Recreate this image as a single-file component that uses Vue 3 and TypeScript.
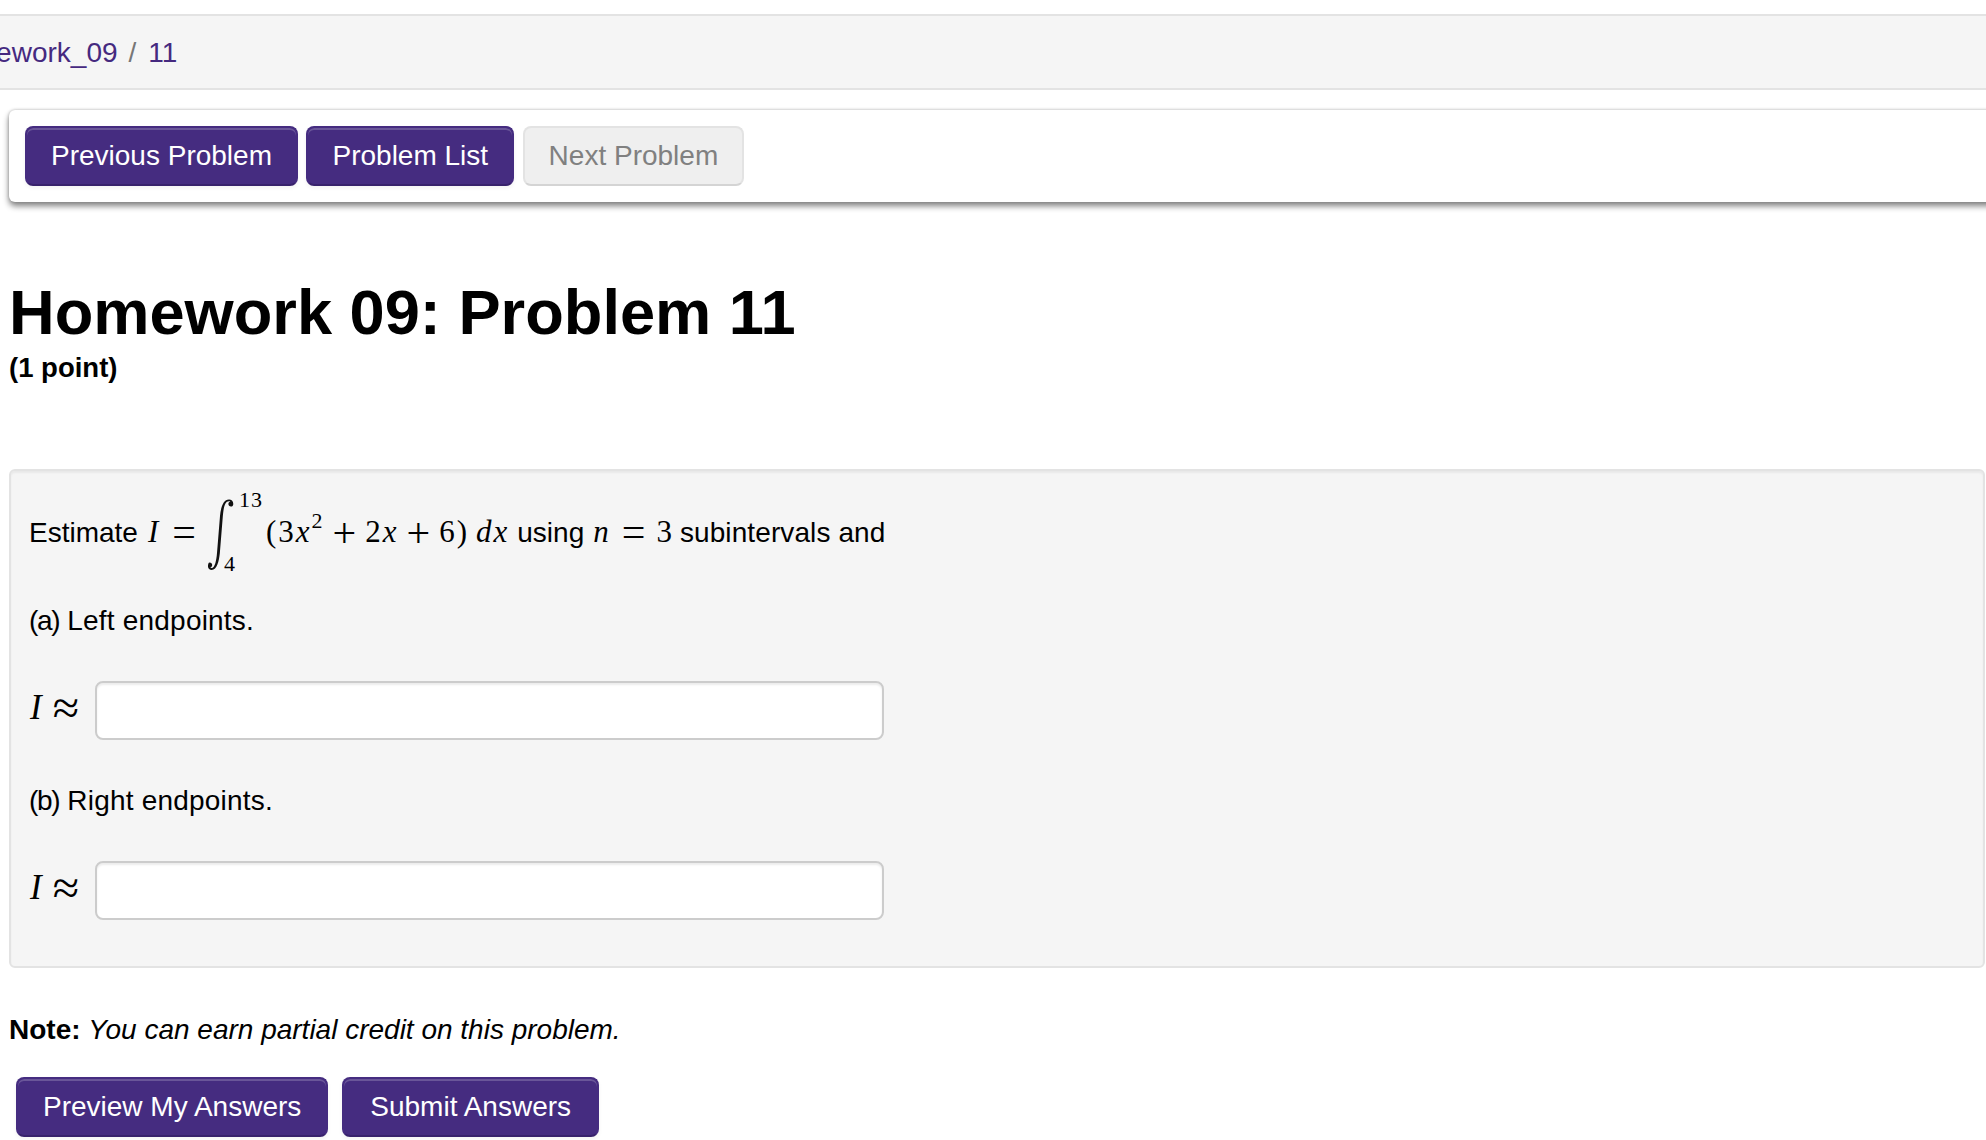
<script setup lang="ts">
const navButtons: { label: string; disabled?: boolean }[] = [
  { label: 'Previous Problem' },
  { label: 'Problem List' },
  { label: 'Next Problem', disabled: true },
]
</script>

<template>
  <div class="page">
    <nav class="crumbs">
      <a class="crumb-link">Homework_09</a>
      <span class="divider">/</span>
      <span class="crumb-active">11</span>
    </nav>

    <div class="toolbar">
      <button
        v-for="b in navButtons"
        :key="b.label"
        class="btn"
        :class="{ disabled: b.disabled }"
        type="button"
      >{{ b.label }}</button>
    </div>

    <h1 class="title">Homework 09: Problem 11</h1>
    <div class="points">(1 point)</div>

    <section class="problem">
      <p class="estimate">
        Estimate
        <span class="math first"><i>I</i><span class="rel rel-first">=</span></span>
        <span class="integral">
          <svg class="int-sign" viewBox="0 0 28 74" width="28" height="74" aria-hidden="true">
            <path d="M2 68.5c0 2.200 1.800 3.600 3.600 3.600 5.400 0 7.400-9 8.200-16.500l3-37C17.600 9 19 3.200 23 3.200c.6 0 1 .1 1.400.3-1.500.5-2 1.600-2 2.600 0 1.500 1.100 2.500 2.500 2.500s2.400-1.100 2.400-2.700C27.300 3 25.300 1.500 23 1.500c-6 0-8.300 8.500-9 16.500l-3 37c-.6 7-2 15-5.400 15-.6 0-1-.1-1.300-.3 1.300-.5 1.900-1.500 1.900-2.600 0-1.500-1.100-2.500-2.500-2.500S2 66.800 2 68.500z" fill="#111" />
          </svg>
          <span class="limits">
            <span class="lim-top">13</span>
            <span class="lim-bottom">4</span>
          </span>
        </span>
        <span class="math">(3<i>x</i><sup class="pow">2</sup><span class="bin">+</span>2<i>x</i><span class="bin">+</span>6)</span>
        <span class="math dx"><i>dx</i></span>
        using
        <span class="math var-n"><i>n</i><span class="rel rel-n">=</span>3</span>
        <span class="tail">subintervals and</span>
      </p>

      <p class="part"><span class="tag">(a)</span> Left endpoints.</p>
      <div class="answer">
        <span class="math approx"><i>I</i><span class="ap">≈</span></span>
        <input class="field" type="text" aria-label="Left endpoint estimate" />
      </div>

      <p class="part part-b"><span class="tag">(b)</span> Right endpoints.</p>
      <div class="answer">
        <span class="math approx"><i>I</i><span class="ap">≈</span></span>
        <input class="field" type="text" aria-label="Right endpoint estimate" />
      </div>
    </section>

    <p class="note"><b>Note:</b> <i>You can earn partial credit on this problem.</i></p>

    <div class="actions">
      <button class="btn btn-wide" type="button">Preview My Answers</button>
      <button class="btn btn-wide" type="button">Submit Answers</button>
    </div>
  </div>
</template>

<style scoped>
.page {
  width: 1986px;
  height: 1140px;
  overflow: hidden;
  background: #fff;
  color: #000;
  font-family: "Liberation Sans", Arial, sans-serif;
  font-size: 28px;
  line-height: 40px;
}
.crumbs {
  box-sizing: border-box;
  height: 76px;
  margin-top: 14px;
  padding-top: 17px;
  background: #f5f5f5;
  border-top: 2px solid #e3e3e3;
  border-bottom: 2px solid #e3e3e3;
  white-space: nowrap;
  color: #45297f;
}
.crumb-link {
  margin-left: -63px;
}
.divider {
  margin: 0 12px 0 11px;
  color: #777;
}
.toolbar {
  box-sizing: border-box;
  display: flex;
  gap: 8.5px;
  width: 2000px;
  height: 92px;
  margin: 20px 0 0 9px;
  padding: 16px;
  background: #fff;
  border-radius: 6px 0 0 6px;
  box-shadow: 0 4px 6px #808080, 0 0 3px #bbb;
}
.btn {
  box-sizing: border-box;
  height: 60px;
  padding: 0 24px;
  font: inherit;
  color: #fff;
  background: #452c80;
  border: 2px solid #452c80;
  border-bottom-color: #38226c;
  border-radius: 8px;
  box-shadow: inset 0 2px 0 rgba(255, 255, 255, 0.2), 0 2px 4px rgba(0, 0, 0, 0.05);
  white-space: nowrap;
}
.btn-wide {
  padding: 0 25px;
}
.btn-wide:last-child {
  padding: 0 26px;
}
.btn.disabled {
  color: #808080;
  background: #efefef;
  border-color: #e3e3e3 #e3e3e3 #d4d4d4;
  box-shadow: none;
}
.title {
  margin: 77px 0 0 9px;
  font-size: 63.200px;
  line-height: 66px;
  font-weight: 700;
}
.points {
  margin: 4px 0 0 9px;
  font-size: 27.500px;
  font-weight: 700;
  line-height: 38px;
}
.problem {
  box-sizing: border-box;
  height: 499px;
  margin: 82px 1px 0 9px;
  padding: 0 18px;
  background: #f5f5f5;
  border: 2px solid #e3e3e3;
  border-radius: 6px;
  box-shadow: inset 0 2px 2px rgba(0, 0, 0, 0.05);
}
.estimate {
  box-sizing: border-box;
  display: flex;
  align-items: baseline;
  gap: 8px;
  height: 130px;
  margin: 0;
  padding-top: 41px;
  white-space: nowrap;
}
.math {
  font-family: "Liberation Serif", "Times New Roman", serif;
  font-size: 31px;
  letter-spacing: 2px;
}
.first {
  margin-left: 2px;
}
.dx {
  margin-left: -1px;
}
.var-n {
  margin-left: 1px;
}
.rel {
  margin: 0 12px;
  font-size: 42px;
  line-height: 0;
  letter-spacing: 1px;
  vertical-align: -4px;
}
.rel-first {
  margin-right: 0;
}
.rel-n {
  margin: 0 10px 0 11px;
}
.bin {
  margin: 0 8px;
  font-size: 42px;
  line-height: 0;
  letter-spacing: 1px;
  vertical-align: -5px;
}
.pow {
  font-size: 22px;
  line-height: 0;
  vertical-align: 14px;
}
.tail {
  margin-left: -2px;
  letter-spacing: 0.1px;
}
.integral {
  display: flex;
  align-self: flex-start;
  width: 52px;
  height: 84px;
  margin: -22px 0 0 1px;
  font-family: "Liberation Serif", "Times New Roman", serif;
  font-size: 22px;
  line-height: 20px;
}
.int-sign {
  flex: none;
  margin-top: 8px;
}
.limits {
  display: flex;
  flex-direction: column;
  justify-content: space-between;
  width: 24px;
}
.lim-top {
  margin-left: 5px;
  letter-spacing: 1px;
}
.lim-bottom {
  margin-left: -10px;
}
.part {
  margin: 0;
  letter-spacing: 0.2px;
}
.tag {
  letter-spacing: -1.300px;
}
.part-b {
  margin-top: 41px;
}
.answer {
  display: flex;
  align-items: flex-start;
  height: 59px;
  margin-top: 40px;
}
.approx {
  flex: none;
  width: 65px;
  margin: 7px 0 0 1px;
  font-size: 35px;
  letter-spacing: 0;
}
.ap {
  margin-left: 11px;
  font-size: 48px;
  line-height: 0;
  vertical-align: -5px;
}
.field {
  box-sizing: border-box;
  width: 789px;
  height: 59px;
  padding: 8px 12px;
  background: #fff;
  border: 2px solid #ccc;
  border-radius: 8px;
  box-shadow: inset 0 2px 2px rgba(0, 0, 0, 0.075);
  outline: none;
}
.note {
  margin: 42px 0 0 9px;
}
.actions {
  display: flex;
  gap: 14px;
  margin: 27px 0 0 16px;
}
</style>
